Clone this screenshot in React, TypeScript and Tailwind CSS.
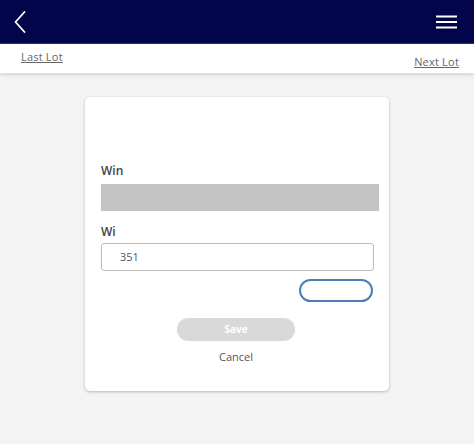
export default function App() {
  return (
    <main className="w-[474px] h-[444px] bg-[#f3f3f3] flex flex-col font-['Open_Sans',sans-serif]">
      <header className="h-[44px] bg-[#03054a] flex items-center justify-between pl-[14px] pr-[17px] border-b border-[#2a2f6a]">
        <svg width="12" height="22" viewBox="0 0 12 22" fill="none">
          <path d="M10.5 1 L1.5 11 L10.5 21" stroke="#ffffff" strokeWidth="1.8" strokeLinecap="round" strokeLinejoin="round" />
        </svg>
        <svg width="21" height="14" viewBox="0 0 21 14" fill="none">
          <path d="M0 1.5 H21 M0 7 H21 M0 12.5 H21" stroke="#ffffff" strokeWidth="2" />
        </svg>
      </header>
      <nav className="h-[29px] bg-white flex justify-between px-[15px] shadow-[0_2px_3px_rgba(0,0,0,0.12)]">
        <a className="text-[11px] text-[#666] underline mt-[5px] ml-[6px] tracking-[0.2px]">Last Lot</a>
        <a className="text-[11px] text-[#666] underline mt-[10px] tracking-[0.2px]">Next Lot</a>
      </nav>
      <section className="flex justify-center pt-[24px]">
        <div className="w-[304px] h-[294px] bg-white rounded-[5px] shadow-[0_1px_3px_rgba(0,0,0,0.25)] pl-[16px] pr-[10px] pt-[66px] flex flex-col">
          <label className="text-[12px] font-semibold text-[#444] leading-[16px]">Win</label>
          <div className="mt-[5px] h-[27px] bg-[#c4c4c4]" />
          <label className="mt-[13px] text-[12px] font-semibold text-[#444] leading-[16px]">Wi</label>
          <div className="mt-[3px] mr-[5px] h-[28px] border border-[#bdbdbd] rounded-[3px] flex items-center pl-[18px] text-[11px] text-[#555]">
            351
          </div>
          <div className="mt-[8px] mr-[6px] flex justify-end">
            <button className="w-[74px] h-[23px] rounded-full border-2 border-[#4a7fb5] bg-white" />
          </div>
          <div className="mt-[16px] pr-[6px] flex flex-col items-center">
            <button className="w-[118px] h-[23px] rounded-full bg-[#d9d9d9] text-white text-[10px] font-bold -ml-[2px]">
              Save
            </button>
            <span className="mt-[8px] text-[11px] text-[#555] -ml-[2px]">Cancel</span>
          </div>
        </div>
      </section>
    </main>
  );
}
